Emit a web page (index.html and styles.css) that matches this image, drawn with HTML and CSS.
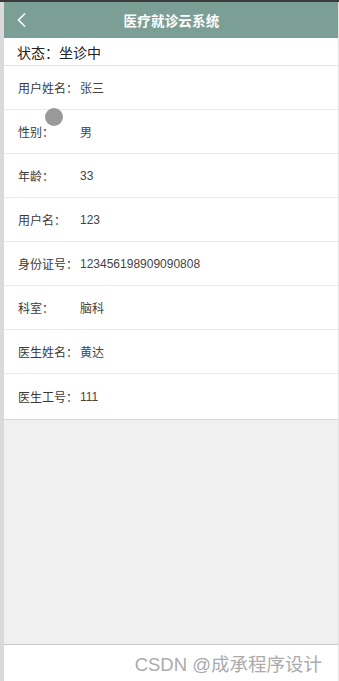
FILE: index.html
```html
<!DOCTYPE html>
<html lang="zh">
<head>
<meta charset="utf-8">
<title>医疗就诊云系统</title>
<link rel="stylesheet" href="styles.css">
</head>
<body>
<div class="topline"></div>
<div class="frame">
  <div class="leftbar"></div>
  <div class="main">
    <header class="header">
      <span class="back">
        <svg width="12" height="16" viewBox="0 0 12 16"><path d="M9 1.5 L2.5 8 L9 14.5" fill="none" stroke="#fff" stroke-width="1.6"/></svg>
      </span>
      <h1 class="title">医疗就诊云系统</h1>
    </header>
    <div class="status">状态：坐诊中</div>
    <ul class="list">
      <li class="row"><span class="label">用户姓名：</span><span class="value">张三</span></li>
      <li class="row"><span class="label">性别：</span><span class="value">男</span></li>
      <li class="row"><span class="label">年龄：</span><span class="value">33</span></li>
      <li class="row"><span class="label">用户名：</span><span class="value">123</span></li>
      <li class="row"><span class="label">身份证号：</span><span class="value">123456198909090808</span></li>
      <li class="row"><span class="label">科室：</span><span class="value">脑科</span></li>
      <li class="row"><span class="label">医生姓名：</span><span class="value">黄达</span></li>
      <li class="row"><span class="label">医生工号：</span><span class="value">111</span></li>
    </ul>
    <div class="fill"></div>
    <footer class="footer">CSDN @成承程序设计</footer>
  </div>
</div>
<div class="touch"></div>
</body>
</html>
```
FILE: styles.css
```css
* { box-sizing: border-box; }
html, body {
  margin: 0;
  padding: 0;
  height: 100%;
}
body {
  font-family: "Liberation Sans", Arial, "Noto Sans CJK SC", sans-serif;
  background: #f0f0f0;
  width: 339px;
  height: 681px;
  overflow: hidden;
  position: relative;
}
.topline {
  height: 2px;
  background: #3a3a3a;
}
.frame {
  display: flex;
  height: 679px;
}
.leftbar {
  width: 4px;
  background: #dadada;
}
.main {
  flex: 1;
  display: flex;
  flex-direction: column;
  border-right: 1px solid #e4e4e4;
}
.header {
  height: 36px;
  background: #7b9e95;
  display: flex;
  align-items: center;
  justify-content: center;
  position: relative;
}
.back {
  position: absolute;
  left: 12px;
  top: 10px;
  display: flex;
}
.title {
  margin: 0;
  color: #fff;
  font-size: 13.5px;
  font-weight: bold;
  letter-spacing: 0.2px;
  padding-left: 1px;
}
.status {
  height: 28px;
  background: #fff;
  border-bottom: 1px solid #e6e6e6;
  padding-left: 13px;
  display: flex;
  align-items: center;
  font-size: 14px;
  color: #222;
}
.list {
  list-style: none;
  margin: 0;
  padding: 0;
  background: #fff;
  border-bottom: 1px solid #d8d8d8;
}
.row {
  height: 44px;
  display: flex;
  align-items: center;
  padding-left: 14px;
  border-bottom: 1px solid #ebebeb;
  font-size: 12px;
  color: #3a3a3a;
}
.row:last-child {
  border-bottom: none;
  height: 45px;
}
.label {
  width: 62px;
  flex: none;
}
.value {
  color: #444;
}
.fill {
  flex: 1;
  background: #f0f0f0;
}
.footer {
  height: 37px;
  background: #fff;
  border-top: 1px solid #c8c8c8;
  display: flex;
  align-items: center;
  justify-content: flex-end;
  padding-right: 16px;
  font-size: 18.5px;
  color: #ababab;
}
.touch {
  position: absolute;
  left: 45px;
  top: 108px;
  width: 18px;
  height: 18px;
  border-radius: 50%;
  background: #8e8e8e;
  opacity: 0.9;
}
```
